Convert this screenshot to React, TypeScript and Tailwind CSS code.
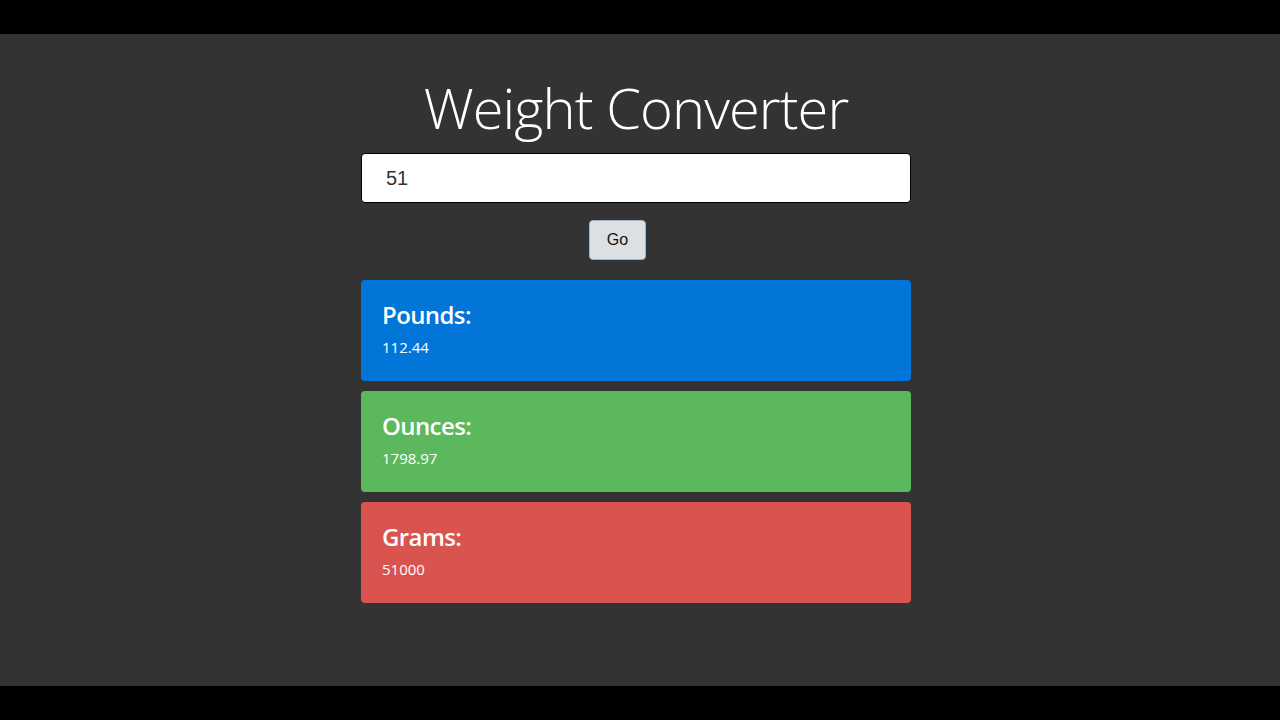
export default function App() {
  const results = [
    { label: 'Pounds:', value: '112.44', bg: 'bg-[#0275d8]' },
    { label: 'Ounces:', value: '1798.97', bg: 'bg-[#5cb85c]' },
    { label: 'Grams:', value: '51000', bg: 'bg-[#d9534f]' },
  ];

  return (
    <div className="flex h-[720px] w-[1280px] flex-col bg-black">
      <div className="h-[34px] shrink-0" />
      <main className="flex h-[652px] shrink-0 justify-center bg-[#333333] pr-[8px]">
        <div className="flex w-[550px] flex-col pt-[38px]">
          <h1 className="text-center font-['Segoe_UI','Open_Sans',sans-serif] text-[56px] font-light leading-[70px] tracking-[-0.9px] text-white">
            Weight Converter
          </h1>

          <input
            type="text"
            defaultValue="51"
            className="mt-[11px] h-[50px] w-full rounded-[4px] border border-black bg-white px-[24px] font-['Liberation_Sans',Arial,sans-serif] text-[20px] text-[#333] outline-none"
          />

          <div className="mt-[17px] flex justify-center pr-[37px]">
            <button className="h-[40px] w-[57px] rounded-[4px] border border-[#a9b3bd] bg-[#dde0e3] font-['Liberation_Sans',Arial,sans-serif] text-[16px] text-[#111] shadow-[0_0_0_1px_#1f3647]">
              Go
            </button>
          </div>

          <div className="mt-[20px] flex flex-col gap-[10px]">
            {results.map((r) => (
              <div
                key={r.label}
                className={`${r.bg} h-[101px] rounded-[4px] px-[21px] pt-[19px] font-['Segoe_UI','Open_Sans',sans-serif] text-white`}
              >
                <h2 className="text-[24px] font-semibold leading-[32px] tracking-[-0.6px]">{r.label}</h2>
                <p className="mt-[5px] text-[15px] leading-[22px]">{r.value}</p>
              </div>
            ))}
          </div>
        </div>
      </main>
      <div className="h-[34px] shrink-0" />
    </div>
  );
}
